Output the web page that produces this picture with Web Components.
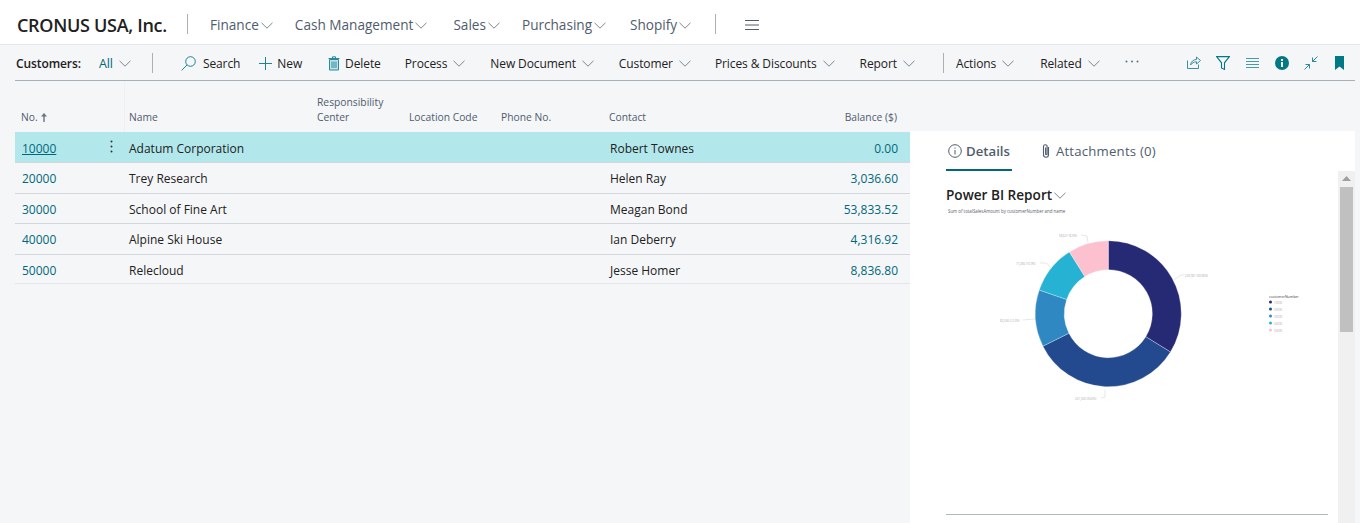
<!DOCTYPE html>
<html lang="en">
<head>
<meta charset="utf-8">
<title>Customers</title>
<style>
  html, body { margin: 0; height: 100%; overflow: hidden; }
  body { background: #f5f6f8; font-family: "Open Sans", "Noto Sans", sans-serif; color: #212121; }
  bc-page { height: 523px; }
</style>
</head>
<body>
<bc-page>
  <bc-nav-bar slot="nav" company="CRONUS USA, Inc.">
    <bc-nav-item style="margin-left:22px">Finance</bc-nav-item>
    <bc-nav-item style="margin-left:22px">Cash Management</bc-nav-item>
    <bc-nav-item style="margin-left:26px">Sales</bc-nav-item>
    <bc-nav-item style="margin-left:22px">Purchasing</bc-nav-item>
    <bc-nav-item style="margin-left:24px">Shopify</bc-nav-item>
  </bc-nav-bar>
  <bc-action-bar slot="actions"></bc-action-bar>
  <bc-customer-list slot="list"></bc-customer-list>
  <bc-factbox slot="factbox"></bc-factbox>
</bc-page>

<script>
const CHEVRON = `<svg class="chev" width="12" height="7" viewBox="0 0 12 7"><path d="M.5.8 6 6.200 11.500.8" fill="none" stroke="#7d868c" stroke-width="1"/></svg>`;

class BcPage extends HTMLElement {
  constructor() {
    super();
    this.attachShadow({ mode: "open" });
    this.shadowRoot.innerHTML = `
      <style>
        :host { display: flex; flex-direction: column; }
        .body { flex: 1; display: flex; align-items: stretch; min-height: 0; padding-left: 15px; padding-right: 5px; }
        .left { width: 895px; flex: none; }
        .right { flex: 1; margin-top: 50px; min-width: 0; }
      </style>
      <slot name="nav"></slot>
      <div style="padding:0 5px 0 15px"><slot name="actions"></slot></div>
      <div class="body">
        <div class="left"><slot name="list"></slot></div>
        <div class="right"><slot name="factbox"></slot></div>
      </div>`;
  }
}

class BcNavItem extends HTMLElement {
  constructor() {
    super();
    this.attachShadow({ mode: "open" });
    this.shadowRoot.innerHTML = `
      <style>
        :host { display: inline-flex; align-items: center; gap: 2px; color: #505c6d; font-size: 13.600px; white-space: nowrap; }
        .chev { margin-top: 1px; }
      </style>
      <slot></slot>${CHEVRON}`;
  }
}

class BcNavBar extends HTMLElement {
  constructor() {
    super();
    this.attachShadow({ mode: "open" });
    this.shadowRoot.innerHTML = `
      <style>
        :host { display: flex; align-items: center; height: 44px; box-sizing: border-box; background: #fff; padding-left: 17px; padding-top: 5px; box-shadow: 0 1px 0 #e6e8ea; margin-bottom: 1px; }
        .name { font-size: 18px; font-weight: 600; color: #212121; white-space: nowrap; width: 150px; letter-spacing: -.3px; }
        .sep { width: 1px; height: 20px; background: #a9b0b6; flex: none; margin-top: -1px; }
        .burger { margin-left: 29px; display: block; }
      </style>
      <span class="name"></span>
      <span class="sep" style="margin-left:20px"></span>
      <slot></slot>
      <span class="sep" style="margin-left:24px"></span>
      <svg class="burger" width="14" height="10" viewBox="0 0 14 10"><path d="M0 .5h14M0 5h14M0 9.500h14" stroke="#505c6d"/></svg>`;
    this.shadowRoot.querySelector(".name").textContent = this.getAttribute("company");
  }
}

class BcAction extends HTMLElement {
  constructor() {
    super();
    this.attachShadow({ mode: "open" });
    this.shadowRoot.innerHTML = `
      <style>
        :host { display: inline-flex; align-items: center; gap: var(--gap, 6px); font-size: 12px; letter-spacing: -.1px; color: #212121; white-space: nowrap; }
        ::slotted(svg) { display: block; }
      </style>
      <slot name="icon"></slot><slot></slot>${this.hasAttribute("menu") ? CHEVRON : ""}`;
  }
}

class BcActionBar extends HTMLElement {
  constructor() {
    super();
    this.attachShadow({ mode: "open" });
    this.shadowRoot.innerHTML = `
      <style>
        :host { display: flex; align-items: center; height: 35px; box-sizing: content-box; border-bottom: 1px solid #a9b0b6; padding-left: 1px; }
        .title { font-size: 12px; font-weight: 600; width: 83px; flex: none; color: #212121; letter-spacing: -.1px; padding-top: 1px; }
        .sep { width: 1px; height: 20px; background: #a9b0b6; flex: none; }
        .items { display: flex; align-items: center; padding-top: 1px; }
        .tools { margin-left: auto; display: flex; align-items: center; }
        .tools svg { display: block; }
        svg { flex: none; }
      </style>
      <span class="title">Customers:</span>
      <div class="items"><bc-action menu><span style="color:#00687a;font-size:12.500px">All</span></bc-action></div>
      <span class="sep" style="margin-left:21px"></span>
      <div class="items">
        <bc-action style="margin-left:28px;--gap:7px"><svg slot="icon" width="15" height="15" viewBox="0 0 15 15" fill="none" stroke="#1f8494"><circle cx="9.500" cy="5.500" r="4.800"/><path d="M6 9 .6 14.400"/></svg>Search</bc-action>
        <bc-action style="margin-left:19px;--gap:5px"><svg slot="icon" width="13" height="13" viewBox="0 0 13 13" fill="none" stroke="#1f8494"><path d="M6.500 0v13M0 6.500h13"/></svg>New</bc-action>
        <bc-action style="margin-left:26px;--gap:5px"><svg slot="icon" width="12" height="15" viewBox="0 0 12 15" fill="#bfe3e8" stroke="#2a8a9a" stroke-width="1"><path d="M1.500 3.500h9v10.500h-9z"/><path d="M.5 2.500h11M4.500 2.500V.8h3v1.700M4 5.500v6.500M6 5.500v6.500M8 5.500v6.500" fill="none"/></svg>Delete</bc-action>
        <bc-action menu style="margin-left:24px">Process</bc-action>
        <bc-action menu style="margin-left:25px">New Document</bc-action>
        <bc-action menu style="margin-left:25px">Customer</bc-action>
        <bc-action menu style="margin-left:24px">Prices &amp; Discounts</bc-action>
        <bc-action menu style="margin-left:25px">Report</bc-action>
      </div>
      <span class="sep" style="margin-left:28px"></span>
      <div class="items">
        <bc-action menu style="margin-left:12px">Actions</bc-action>
        <bc-action menu style="margin-left:26px">Related</bc-action>
        <svg style="margin-left:25px;margin-top:-3px" width="14" height="3" viewBox="0 0 14 3" fill="#5d7480"><circle cx="1.500" cy="1.500" r="1"/><circle cx="7" cy="1.500" r="1"/><circle cx="12.500" cy="1.500" r="1"/></svg>
      </div>
      <div class="tools">
        <svg style="margin-top:-2px" width="14" height="14" viewBox="0 0 14 14" fill="none" stroke="#3c8f9c"><path d="M.5 5.500v8h11V9.500"/><path d="M3.500 10C4 6.500 6.500 4.500 9.500 4.500V2L13.500 5.500 9.500 9V6.800C7 6.800 5 8 3.500 10z"/></svg>
        <svg style="margin-left:15px" width="14" height="14" viewBox="0 0 14 14" fill="none" stroke="#007985" stroke-width="1.100"><path d="M.6.6h12.800L8.500 6.800v6.600l-3-1.500V6.800z"/></svg>
        <svg style="margin-left:16px" width="13" height="10" viewBox="0 0 13 10" fill="none" stroke="#4a9aa6"><path d="M0 .5h13M0 3.500h13M0 6.500h13M0 9.500h13"/></svg>
        <svg style="margin-left:16px" width="14" height="14" viewBox="0 0 14 14"><circle cx="7" cy="7" r="7" fill="#007985"/><path d="M6 6h2v5H6zM6 3h2v2H6z" fill="#fff"/></svg>
        <svg style="margin-left:15px" width="14" height="14" viewBox="0 0 14 14" fill="none" stroke="#2a8a9a"><path d="M13.500.5 8.500 5.500M8.500 1.500v4h4M.5 13.500l5-5M1.500 8.500h4v4"/></svg>
        <svg style="margin-left:17px;margin-right:11px" width="9" height="14" viewBox="0 0 9 14"><path d="M0 0h9v14L4.500 10.500 0 14z" fill="#007985"/></svg>
      </div>`;
  }
}

const CUSTOMERS = [
  ["10000", "Adatum Corporation", "Robert Townes", "0.00"],
  ["20000", "Trey Research", "Helen Ray", "3,036.60"],
  ["30000", "School of Fine Art", "Meagan Bond", "53,833.52"],
  ["40000", "Alpine Ski House", "Ian Deberry", "4,316.92"],
  ["50000", "Relecloud", "Jesse Homer", "8,836.80"],
];
const ROW_HEIGHTS = [31, 31, 30, 31, 29];
const ROW_PADDING = [2, 0, 2, 0, 2];
const COLUMNS = "109px 188px 92px 92px 108px 156px 150px";

class BcCustomerRow extends HTMLElement {
  constructor() {
    super();
    this.attachShadow({ mode: "open" });
    this.shadowRoot.innerHTML = `
      <style>
        :host { display: grid; grid-template-columns: ${COLUMNS}; align-items: center; box-sizing: border-box; border-bottom: 1px solid #d3d6da; font-size: 12px; color: #212121; }
        :host([selected]) { background: #b2e8ec; }
        .no { padding-left: 7px; color: #00687a; position: relative; }
        :host([selected]) .no span { text-decoration: underline; }
        .dots { position: absolute; left: 95px; top: 50%; margin-top: -8px; display: block; }
        .name { padding-left: 5px; }
        .contact { padding-left: 6px; grid-column: 6; }
        .bal { text-align: right; padding-right: 12px; grid-column: 7; color: #00687a; }
      </style>
      <div class="no"><span></span></div>
      <div class="name"></div>
      <div class="contact"></div>
      <div class="bal"></div>`;
  }

  set data([no, name, contact, balance]) {
    const root = this.shadowRoot;
    root.querySelector(".no span").textContent = no;
    root.querySelector(".name").textContent = name;
    root.querySelector(".contact").textContent = contact;
    root.querySelector(".bal").textContent = balance;
    if (this.hasAttribute("selected")) {
      root.querySelector(".no").insertAdjacentHTML("beforeend", `<svg class="dots" width="3" height="13" viewBox="0 0 3 13" fill="#333"><circle cx="1.500" cy="1.500" r="1"/><circle cx="1.500" cy="6.500" r="1"/><circle cx="1.500" cy="11.500" r="1"/></svg>`);
    }
  }
}

class BcCustomerList extends HTMLElement {
  constructor() {
    super();
    this.attachShadow({ mode: "open" });
    this.shadowRoot.innerHTML = `
      <style>
        :host { display: block; }
        .head { display: grid; grid-template-columns: ${COLUMNS}; align-items: end; height: 51px; box-sizing: border-box; padding-bottom: 7px; font-size: 10.300px; line-height: 15px; color: #505c6d; }
        .head div { padding-left: 5px; }
        .head .first { display: flex; gap: 3px; padding-left: 6px; box-shadow: 1px 0 0 #eef0f2; height: 51px; margin-bottom: -7px; padding-bottom: 7px; box-sizing: border-box; align-items: flex-end; }
        .head .first svg { margin-bottom: 3px; }
        .head .bal { text-align: right; padding: 0 13px 0 0; }
        bc-customer-row:last-child { border-bottom-color: #e3e5e8; }
      </style>
      <div class="head">
        <div class="first">No.<svg width="6" height="9" viewBox="0 0 6 9"><path d="M3 0 6 3.500H3.700V9H2.300V3.500H0z" fill="#6a747c"/></svg></div>
        <div>Name</div>
        <div>Responsibility<br>Center</div>
        <div>Location Code</div>
        <div>Phone No.</div>
        <div>Contact</div>
        <div class="bal">Balance ($)</div>
      </div>
      <div class="rows"></div>`;
    const rows = this.shadowRoot.querySelector(".rows");
    CUSTOMERS.forEach((c, i) => {
      const row = document.createElement("bc-customer-row");
      if (i === 0) row.setAttribute("selected", "");
      row.style.height = ROW_HEIGHTS[i] + "px";
      row.style.paddingTop = ROW_PADDING[i] + "px";
      rows.appendChild(row);
      row.data = c;
    });
  }
}

class BcDonut extends HTMLElement {
  constructor() {
    super();
    this.attachShadow({ mode: "open" });
    const slices = [
      [0, 121.6, "#262a74"],
      [121.6, 243.6, "#234a8f"],
      [243.6, 288.9, "#2f88c2"],
      [288.9, 327.8, "#25b2d3"],
      [327.8, 360, "#fdc0cf"],
    ];
    const cx = 162.3, cy = 108.7, ro = 73, ri = 44;
    const pt = (r, a) => {
      const t = (a * Math.PI) / 180;
      return `${(cx + r * Math.sin(t)).toFixed(2)} ${(cy - r * Math.cos(t)).toFixed(2)}`;
    };
    const paths = slices
      .map(([a, b, c]) => {
        const large = b - a > 180 ? 1 : 0;
        return `<path fill="${c}" stroke="#fff" stroke-width=".3" d="M${pt(ri, a)}L${pt(ro, a)}A${ro} ${ro} 0 ${large} 1 ${pt(ro, b)}L${pt(ri, b)}A${ri} ${ri} 0 ${large} 0 ${pt(ri, a)}Z"/>`;
      })
      .join("");
    const legend = slices
      .map(([, , c], i) => `<circle cx="324.500" cy="${97 + i * 7}" r="1.500" fill="${c}"/><text x="328" y="${98.500 + i * 7}" fill="#b9a9a9">${(i + 1) * 10000}</text>`)
      .join("");
    this.shadowRoot.innerHTML = `
      <style>
        :host { display: block; }
        svg { display: block; font-family: "Open Sans", sans-serif; }
        text { font-size: 2.900px; }
      </style>
      <svg width="392" height="230" viewBox="0 0 392 230">
        <text x="2" y="8" fill="#5a5a6a" style="font-size:4.400px">Sum of totalSalesAmount by customerNumber and name</text>
        ${paths}
        <g fill="none" stroke="#ccc" stroke-width=".5">
          <path d="M228 75l6-4.500 4.400-.8"/><path d="M76.600 115l12.400-1"/><path d="M94 58h6.600l5 6"/><path d="M135 30l6 1 1 6.600"/><path d="M155 193l4-1v-7.400"/>
        </g>
        <g fill="#a8a8a8">
          <text x="239" y="71.500">223,581 (33.96%)</text>
          <text x="54" y="116.500">82,556 (12.5%)</text>
          <text x="70" y="59.500">71,456 (10.9%)</text>
          <text x="113" y="31.500">58,621 (8.9%)</text>
          <text x="129" y="194.500">221,526 (33.6%)</text>
        </g>
        <text x="323" y="92.500" fill="#444" style="font-size:3.600px">customerNumber</text>
        ${legend}
      </svg>`;
  }
}

class BcFactbox extends HTMLElement {
  constructor() {
    super();
    this.attachShadow({ mode: "open" });
    this.shadowRoot.innerHTML = `
      <style>
        :host { display: block; background: #fff; height: 392px; overflow: hidden; }
        .tabs { display: flex; height: 40px; padding-left: 36px; font-size: 13.200px; color: #505c6d; }
        .tab { display: flex; align-items: center; gap: 5px; height: 38px; padding: 2px 2px 0; box-sizing: border-box; letter-spacing: .2px; }
        .tab svg { display: block; margin-top: -1px; }
        .tab.on { border-bottom: 2px solid #00687a; height: 40px; font-weight: 600; gap: 4px; letter-spacing: 0; }
        .tab + .tab { margin-left: 27px; }
        .pane { display: flex; height: 352px; }
        .content { flex: 1; padding-left: 36px; min-width: 0; position: relative; }
        h2 { margin: 0; padding-top: 14px; font-size: 13.600px; font-weight: 600; color: #212121; display: flex; align-items: center; gap: 2px; line-height: 20px; }
        .rule { position: absolute; left: 36px; right: 10px; top: 343px; height: 1px; background: #b0b8bd; }
        .scroll { width: 17px; background: #f0f0f0; flex: none; display: flex; flex-direction: column; align-items: center; }
        .arrow { margin-top: 5px; display: block; }
        .thumb { margin-top: 6px; width: 13px; height: 145px; background: #c0c0c0; }
      </style>
      <div class="tabs">
        <div class="tab on"><svg width="14" height="14" viewBox="0 0 14 14" fill="none" stroke="#505c6d"><circle cx="7" cy="7" r="6.300"/><path d="M7 6v4.500M7 3.500v1.200"/></svg>Details</div>
        <div class="tab"><svg width="10" height="15" viewBox="0 0 10 15" fill="none" stroke="#505c6d" stroke-width="1.100"><path d="M7.500 3.500v7.800a2.500 2.500 0 0 1-5 0V3a1.800 1.800 0 0 1 3.600 0v7.500a.8.8 0 0 1-1.500 0V4" transform="translate(0 .5)"/></svg>Attachments (0)</div>
      </div>
      <div class="pane">
        <div class="content">
          <h2>Power BI Report${CHEVRON}</h2>
          <bc-donut></bc-donut>
          <div class="rule"></div>
        </div>
        <div class="scroll">
          <svg class="arrow" width="9" height="5" viewBox="0 0 9 5"><path d="M4.500 0 9 5H0z" fill="#a0a0a0"/></svg>
          <div class="thumb"></div>
        </div>
      </div>`;
  }
}

customElements.define("bc-page", BcPage);
customElements.define("bc-nav-item", BcNavItem);
customElements.define("bc-nav-bar", BcNavBar);
customElements.define("bc-action", BcAction);
customElements.define("bc-action-bar", BcActionBar);
customElements.define("bc-customer-row", BcCustomerRow);
customElements.define("bc-customer-list", BcCustomerList);
customElements.define("bc-donut", BcDonut);
customElements.define("bc-factbox", BcFactbox);
</script>
</body>
</html>
